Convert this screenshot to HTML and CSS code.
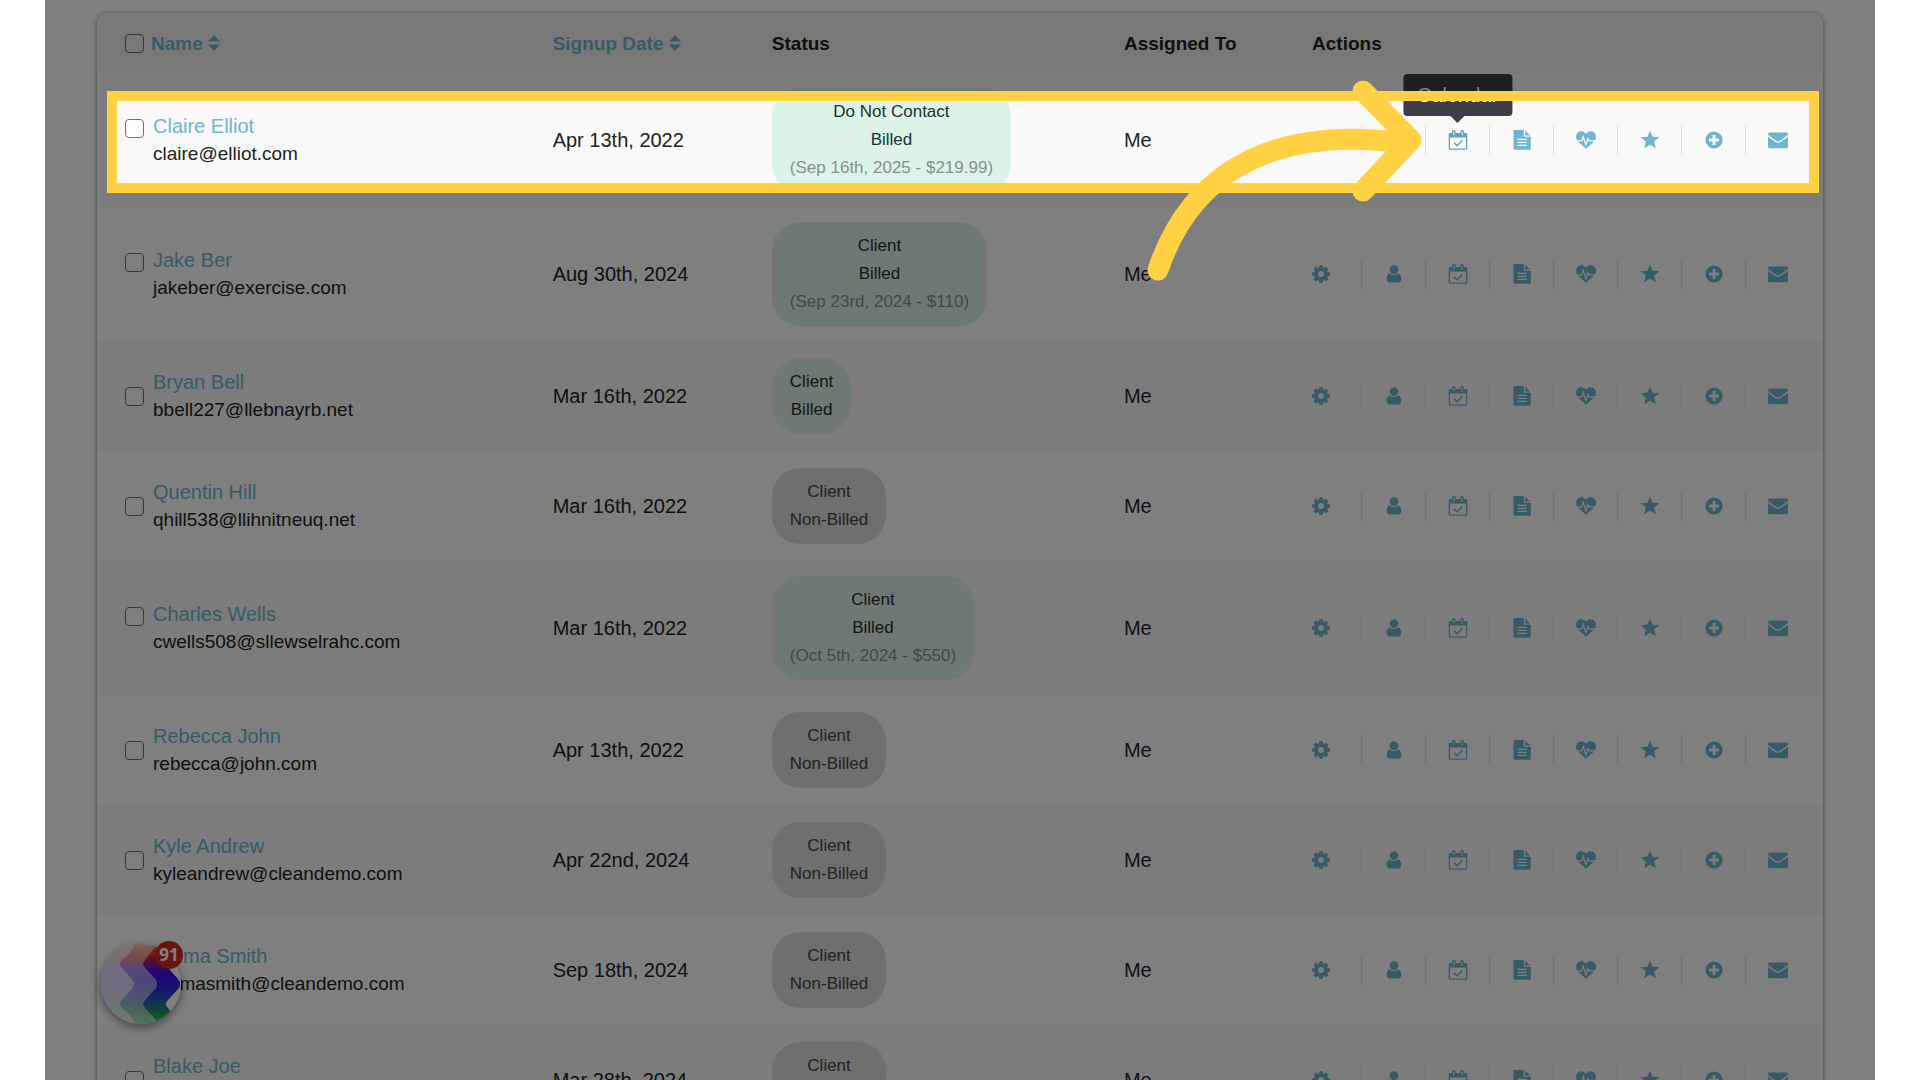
FILE: index.html
```html
<!DOCTYPE html>
<html lang="en">
<head>
<meta charset="utf-8">
<title>Clients</title>
<link rel="stylesheet" href="styles.css">
</head>
<body>
<svg class="sprite" aria-hidden="true">
  <symbol id="i-gear" viewBox="0 0 18 18"><path fill-rule="evenodd" d="M7.6 0h2.8l.5 2.2 1.3.6L14.100 1.600l2.300 2.300-1.200 1.900.6 1.300 2.200.5v2.800l-2.200.5-.6 1.300 1.200 1.900-2.300 2.300-1.900-1.200-1.300.6-.5 2.200H7.600l-.5-2.200-1.300-.6-1.900 1.200-2.300-2.300 1.200-1.900-.6-1.300L0 10.400V7.600l2.200-.5.6-1.300L1.600 3.900l2.300-2.300 1.900 1.200 1.300-.6zM9 6a3 3 0 1 0 0 6a3 3 0 0 0 0-6z"/></symbol>
  <symbol id="i-user" viewBox="0 0 18 18"><circle cx="9" cy="4.600" r="4.400"/><path d="M5 8.400C2.600 8.700 1.700 11 1.700 14c0 2 1.100 3.500 2.900 3.500h8.800c1.800 0 2.900-1.500 2.900-3.500 0-3-.9-5.300-3.300-5.600a5.600 5.600 0 0 1-8 0z"/></symbol>
  <symbol id="i-cal" viewBox="0 0 20 20"><path fill-rule="evenodd" d="M2 3h2V1.800a1.600 1.600 0 0 1 3.600 0V3h4.800V1.800a1.600 1.600 0 0 1 3.600 0V3h2a1.300 1.300 0 0 1 1.300 1.300v14.200A1.300 1.300 0 0 1 18 19.800H2A1.300 1.300 0 0 1 .7 18.500V4.300A1.300 1.300 0 0 1 2 3zm0 4.500v11h16v-11zM5.300 1.800v3.400h1V1.800zm8.400 0v3.400h1V1.800z"/><path d="M6 12.700l3 3 5.500-5.500" fill="none" stroke="currentColor" stroke-width="1.500"/></symbol>
  <symbol id="i-doc" viewBox="0 0 20 20"><path fill-rule="evenodd" d="M2.300 0h9.500v6.800h7v12a1 1 0 0 1-1 1H2.600a1.200 1.200 0 0 1-1.100-1.100V1A1 1 0 0 1 2.300 0zM5.500 8.700V10h9.300V8.700zm0 3V13h9.300v-1.300zm0 3V16h9.300v-1.300z"/><path d="M13.200.5l5 4.900h-5z"/></symbol>
  <symbol id="i-heart" viewBox="0 0 20 20"><path d="M10 4C8.800 2 7 1 5 1.200 2 1.500 0 3.600 0 6.800c0 1.300.4 2.400 1 3.400h4.300l1.900-5.800 2.700 8.400L11.700 7l1.900 3.200H19c.6-1 1-2.100 1-3.400 0-3.200-2-5.300-5-5.600-2-.2-3.800.8-5 2.800z"/><path d="M2 11.500h4.200l1-2.900 2.700 8.200 2.100-6.500.8 1.200H18L10 18.800z"/></symbol>
  <symbol id="i-star" viewBox="0 0 20 20"><path d="M10 .4l2.500 6.300 6.900.5-5.300 4.400 1.700 6.700L10 14.700l-5.800 3.600 1.700-6.700L.6 7.200l6.900-.5z"/></symbol>
  <symbol id="i-plus" viewBox="0 0 18 18"><path fill-rule="evenodd" d="M9 .4a8.600 8.600 0 1 0 0 17.200A8.600 8.600 0 0 0 9 .4zM7.600 4h2.800v3.600H14v2.800h-3.600V14H7.600v-3.600H4V7.600h3.600z"/></symbol>
  <symbol id="i-mail" viewBox="0 0 20 20"><path d="M1.500 2.500h17A1.500 1.500 0 0 1 20 4v.8c-3 2.600-6 4.800-8.500 6.300q-1.500.8-3 0C6 9.600 3 7.400 0 4.800V4a1.500 1.500 0 0 1 1.500-1.500z"/><path d="M0 6.500c2.600 2.300 5.300 4.300 7.800 5.700q2.200 1.200 4.400 0c2.500-1.400 5.200-3.400 7.800-5.700v10a1.700 1.700 0 0 1-1.700 1.700H1.700A1.700 1.700 0 0 1 0 16.500z"/></symbol>
  <symbol id="i-sort" viewBox="0 0 12 16"><path d="M6 0l6 6.600H0zM6 16L0 9.400h12z"/></symbol>
</svg>
<main class="stage">
  <section class="card">
    <table class="clients">
      <thead>
        <tr>
          <th class="col-name"><div class="person"><input type="checkbox" aria-label="Select all clients"><a href="#name">Name <svg class="sort"><use href="#i-sort"/></svg></a></div></th>
          <th class="col-date"><a href="#date">Signup Date <svg class="sort"><use href="#i-sort"/></svg></a></th>
          <th class="col-status">Status</th>
          <th class="col-assigned">Assigned To</th>
          <th class="col-actions">Actions</th>
        </tr>
      </thead>
      <tbody id="rows"></tbody>
    </table>
  </section>
  <button class="launcher" aria-label="Open messages, 91 unread">
    <svg viewBox="0 0 80 80">
      <defs>
        <linearGradient id="g" x1="0" y1="0" x2="0" y2="80" gradientUnits="userSpaceOnUse">
          <stop offset="0" stop-color="#f08050"/><stop offset=".16" stop-color="#d82818"/><stop offset=".32" stop-color="#4a10e0"/><stop offset=".5" stop-color="#3018e8"/><stop offset=".68" stop-color="#2050c0"/><stop offset=".88" stop-color="#28a050"/><stop offset="1" stop-color="#40c860"/>
        </linearGradient>
        <clipPath id="c"><circle cx="40" cy="40" r="40"/></clipPath>
      </defs>
      <g clip-path="url(#c)">
        <rect width="80" height="80" fill="#fff"/>
        <path fill="url(#g)" opacity=".17" d="M0 0H33Q33 4 30 8L21 16Q17 20 21 24L31 35Q35 40 31 45L21 56Q17 60 21 64L30 72Q33 76 33 80H0z"/>
        <path fill="url(#g)" opacity=".48" d="M33 0H56L44 16Q40 20 44 24L54 35Q58 40 54 45L44 56Q40 60 44 64L58 80H33Q33 76 30 72L21 64Q17 60 21 56L31 45Q35 40 31 35L21 24Q17 20 21 16L30 8Q33 4 33 0z"/>
        <path fill="url(#g)" d="M56 0H80L68 16Q63 20 67 24L77 35Q81 40 77 45L67 56Q63 60 67 64L80 80H58L44 64Q40 60 44 56L54 45Q58 40 54 35L44 24Q40 20 44 16z"/>
      </g>
    </svg>
    <span class="badge">91</span>
  </button>
  <div class="spotlight"></div>
  <svg class="arrow" viewBox="0 0 300 220" aria-hidden="true"><path d="M29 190C60 98 135 49 259 61L282 60M234 11L282 60L234 111"/></svg>
</main>
<script src="script.js"></script>
</body>
</html>
```
FILE: styles.css
```css
* { box-sizing: border-box; }
body { margin: 0; background: #fff; color: #222; font: 20px/27px "Liberation Sans", Arial, sans-serif; }
.sprite { display: none; }
svg { fill: currentColor; }
a { color: #6fb6cc; text-decoration: none; }

.stage { position: relative; height: 100vh; margin: 0 45px; padding: 13px 52px 0; overflow: hidden; background: #fff; }
.card { border-radius: 10px; box-shadow: 0 1px 5px #6d7f8c; overflow: hidden; }

.clients { width: 100%; border-collapse: collapse; table-layout: fixed; }
.clients th, .clients td { padding: 0; text-align: left; }
.clients th { height: 60px; background: #f1f1f1; font-size: 19px; }
.clients td { height: 110px; }
.clients .tall td { height: 134px; }
.clients tbody tr:nth-child(odd) { background: #f9f9f9; }
.col-name { width: 26.4%; }
.col-date { width: 12.7%; }
.col-status { width: 20.4%; }
.col-assigned { width: 10.9%; }

.sort { width: 12px; height: 16px; vertical-align: -1px; }
.person { display: flex; align-items: center; gap: 7px; padding-left: 28px; }
.person input { appearance: none; flex: none; width: 19px; height: 19px; margin: 0; border: 1px solid #6f6f6f; border-radius: 4px; background: #fff; }
th .person input { background: transparent; }
.clients .client { vertical-align: top; }
.client .person { align-items: flex-start; gap: 9px; padding-top: 40px; }
.client input { margin-top: 6px; }
.who { display: grid; }
.email { font-size: 19px; }
.client .person .who { margin-top: -12px; }
.tall .client .person .who { margin-top: 0; }

.pill { display: inline-block; padding: 10px 18px; border-radius: 28px; background: #dcf3e8; font-size: 17px; line-height: 28px; text-align: center; vertical-align: middle; color: #23302b; }
.pill span { display: block; }
.pill .paid { color: #8b8f8d; }
.pill.unbilled { background: #dedede; color: #444; }

.actions { display: flex; }
.actions button { position: relative; display: flex; flex: 0 1 64px; align-items: center; justify-content: center; height: 30px; padding: 0; border: 0; border-left: 1px solid #ddd; background: none; color: #6fb6cc; font: inherit; }
.actions button:first-child { flex-basis: 49px; justify-content: flex-start; border: 0; }
.actions svg { width: 20px; height: 20px; }
.actions .small { width: 18px; height: 18px; }
.actions .hover { color: #5fa3b8; }
.tooltip { position: absolute; bottom: 39px; left: 50%; padding: 8px 14px 7px; border-radius: 4px; background: #3b3e47; color: #fff; transform: translateX(-50%); }
.tooltip::after { position: absolute; top: 100%; left: 50%; border: 7px solid transparent; border-top-color: #3b3e47; border-bottom: 0; content: ""; transform: translateX(-50%); }

.launcher { position: absolute; bottom: 56px; left: 56px; width: 80px; height: 80px; padding: 0; border: 0; border-radius: 50%; box-shadow: 0 3px 10px rgba(0, 0, 0, .5); }
.launcher svg { display: block; }
.badge { position: absolute; top: -3px; right: -2px; width: 28px; height: 28px; border-radius: 50%; background: #cf2a1c; color: #fff; font: bold 17px/28px "Open Sans", sans-serif; }

.spotlight { position: absolute; top: 91px; right: 56px; left: 62px; height: 102px; border: 10px solid #ffd143; box-shadow: 0 0 0 2000px rgba(0, 0, 0, .5); }
.arrow { position: absolute; top: 80px; left: 1084px; width: 300px; height: 220px; fill: none; stroke: #ffd143; stroke-width: 21; stroke-linecap: round; stroke-linejoin: round; }
```
FILE: script.js
```js
const clients = [
  ["Claire Elliot", "claire@elliot.com", "Apr 13th, 2022", "Do Not Contact", "Billed", "(Sep 16th, 2025 - $219.99)"],
  ["Jake Ber", "jakeber@exercise.com", "Aug 30th, 2024", "Client", "Billed", "(Sep 23rd, 2024 - $110)"],
  ["Bryan Bell", "bbell227@llebnayrb.net", "Mar 16th, 2022", "Client", "Billed"],
  ["Quentin Hill", "qhill538@llihnitneuq.net", "Mar 16th, 2022", "Client", "Non-Billed"],
  ["Charles Wells", "cwells508@sllewselrahc.com", "Mar 16th, 2022", "Client", "Billed", "(Oct 5th, 2024 - $550)"],
  ["Rebecca John", "rebecca@john.com", "Apr 13th, 2022", "Client", "Non-Billed"],
  ["Kyle Andrew", "kyleandrew@cleandemo.com", "Apr 22nd, 2024", "Client", "Non-Billed"],
  ["Emma Smith", "emmasmith@cleandemo.com", "Sep 18th, 2024", "Client", "Non-Billed"],
  ["Blake Joe", "blakejoe@cleandemo.com", "Mar 28th, 2024", "Client", "Non-Billed"]
];
const actions = [["gear", "Settings"], ["user", "Profile"], ["cal", "Calendar"], ["doc", "Notes"], ["heart", "Health"], ["star", "Favorite"], ["plus", "Add"], ["mail", "Message"]];
const small = ["gear", "user", "plus"];

document.getElementById("rows").innerHTML = clients.map(([name, email, date, kind, billing, paid], row) => {
  const buttons = actions.map(([icon, label]) => {
    const hovered = row === 0 && icon === "cal";
    return `<button aria-label="${label}"${hovered ? ' class="hover"' : ""}><svg${small.includes(icon) ? ' class="small"' : ""}><use href="#i-${icon}"/></svg>${hovered ? '<span class="tooltip">Calendar</span>' : ""}</button>`;
  }).join("");
  return `<tr class="${paid ? "tall" : ""}">
    <td class="client"><div class="person"><input type="checkbox" aria-label="Select ${name}"><div class="who"><a href="#client">${name}</a><span class="email">${email}</span></div></div></td>
    <td>${date}</td>
    <td><div class="pill ${billing === "Billed" ? "" : "unbilled"}"><span>${kind}</span><span>${billing}</span>${paid ? `<span class="paid">${paid}</span>` : ""}</div></td>
    <td>Me</td>
    <td><div class="actions">${buttons}</div></td>
  </tr>`;
}).join("");
```
